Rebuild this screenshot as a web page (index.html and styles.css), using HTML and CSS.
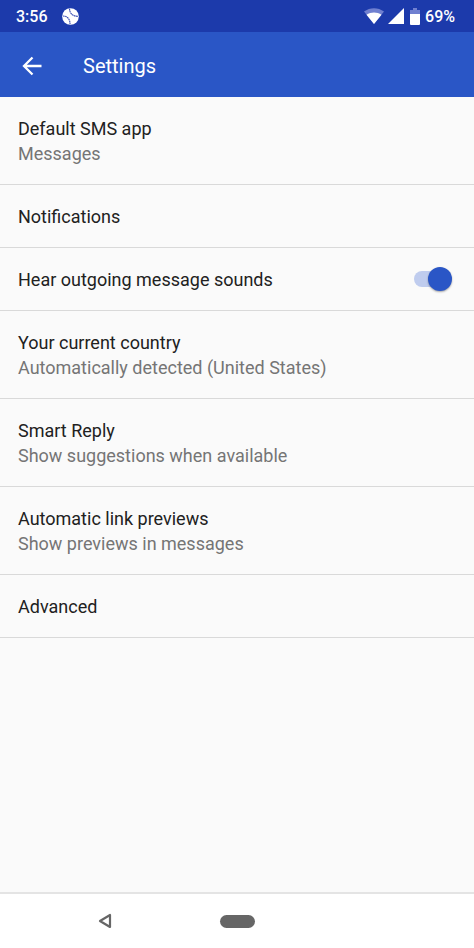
FILE: index.html
```html
<!DOCTYPE html>
<html lang="en">
<head>
<meta charset="utf-8">
<meta name="viewport" content="width=device-width, initial-scale=1">
<title>Settings</title>
<link rel="stylesheet" href="styles.css">
</head>
<body>
<div class="status">
  <span>3:56</span>
  <svg class="ball" viewBox="0 0 18 18" aria-hidden="true">
    <circle cx="9" cy="9" r="8.8" fill="#fff"/>
    <path d="M1 8.500c4.500 0 7.500 3 7.500 8.500M8 .8c0 5 3.500 8 9 8" fill="none" stroke="#3c50b4" stroke-width="1.200" stroke-dasharray="1.800 .5"/>
  </svg>
  <div class="indicators">
    <svg class="wifi" viewBox="0 0 20 16" aria-hidden="true">
      <path d="M0 3.500C6-1 14-1 20 3.500L10 16z" fill="#7080d0"/>
      <path d="M2.500 6.800C7 3.800 13 3.800 17.500 6.800L10 16z" fill="#fff"/>
    </svg>
    <svg class="signal" viewBox="0 0 16 16" aria-hidden="true"><path d="M16 0v16H0z" fill="#fff"/></svg>
    <svg class="battery" viewBox="0 0 10 17" aria-hidden="true">
      <path d="M3 0h4v2h3v5H0V2h3z" fill="#7080d0"/>
      <path d="M0 6h10v10q0 1-1 1H1q-1 0-1-1z" fill="#fff"/>
    </svg>
    <span>69%</span>
  </div>
</div>
<header class="bar">
  <button class="back" type="button" aria-label="Back">
    <svg viewBox="0 0 20 20" aria-hidden="true"><path d="M19.500 10H2M10.500 1.500L2 10l8.500 8.500" fill="none" stroke="#fff" stroke-width="2.300"/></svg>
  </button>
  <h1>Settings</h1>
</header>
<main class="list">
  <a class="row tall" href="#sms"><span class="name">Default SMS app</span><span class="detail">Messages</span></a>
  <a class="row" href="#notifications"><span class="name">Notifications</span></a>
  <label class="row toggle"><span class="name">Hear outgoing message sounds</span><input class="switch" type="checkbox" role="switch" checked></label>
  <a class="row tall" href="#country"><span class="name">Your current country</span><span class="detail">Automatically detected (United States)</span></a>
  <a class="row tall" href="#reply"><span class="name">Smart Reply</span><span class="detail">Show suggestions when available</span></a>
  <a class="row tall" href="#previews"><span class="name">Automatic link previews</span><span class="detail">Show previews in messages</span></a>
  <a class="row" href="#advanced"><span class="name">Advanced</span></a>
</main>
<nav class="nav" aria-label="System">
  <button class="nav-back" type="button" aria-label="Back">
    <svg viewBox="0 0 14 16" aria-hidden="true"><path d="M12 2v12L2 8z" fill="none" stroke="#666" stroke-width="2.200" stroke-linejoin="round"/></svg>
  </button>
  <button class="home" type="button" aria-label="Home"></button>
</nav>
</body>
</html>
```
FILE: styles.css
```css
* { box-sizing: border-box; }
body {
  margin: 0;
  min-height: 100vh;
  display: flex;
  flex-direction: column;
  background: #fafafa;
  color: #212121;
  font-family: Roboto, "Liberation Sans", sans-serif;
  font-size: 18px;
}
svg { display: block; }
button { border: 0; padding: 0; background: none; }
.status {
  height: 32px;
  padding: 0 19px 0 16px;
  display: flex;
  align-items: center;
  gap: 14px;
  background: #1c3aab;
  color: #fff;
  font-size: 16px;
  font-weight: 500;
}
.ball { width: 17px; height: 17px; }
.indicators { margin-left: auto; display: flex; align-items: center; gap: 4px; }
.wifi { width: 20px; height: 16px; }
.signal { width: 16px; height: 16px; }
.battery { width: 10px; height: 17px; margin: 0 1px 0 2px; }
.bar {
  height: 65px;
  padding: 2px 22px 0;
  display: flex;
  align-items: center;
  gap: 41px;
  background: #2a56c6;
}
.back svg { width: 20px; height: 20px; }
h1 { margin: 0; color: #fff; font-size: 20px; font-weight: 400; }
.list { flex: 1; }
.row {
  min-height: 63px;
  padding: 0 18px;
  display: flex;
  flex-direction: column;
  justify-content: center;
  border-bottom: 1px solid #d9d9d9;
  color: inherit;
  text-decoration: none;
  line-height: 25px;
}
.tall { min-height: 88px; }
.detail { color: #757575; }
.toggle { flex-direction: row; align-items: center; justify-content: space-between; }
.switch {
  appearance: none;
  position: relative;
  width: 34px;
  height: 16px;
  margin: 0 8px 0 0;
  border-radius: 8px;
  background: #bfccee;
}
.switch::before {
  content: "";
  position: absolute;
  top: -4px;
  left: 0;
  width: 24px;
  height: 24px;
  border-radius: 50%;
  background: #fafafa;
  box-shadow: 0 1px 2px rgba(0, 0, 0, .35);
}
.switch:checked::before { left: 14px; background: #2a56c6; }
.nav {
  height: 56px;
  display: grid;
  grid-template-columns: 1fr auto 1fr;
  align-items: center;
  background: #fff;
  border-top: 2px solid #e4e4e4;
}
.nav-back { justify-self: center; margin-right: 10px; }
.nav-back svg { width: 14px; height: 16px; }
.home { width: 35px; height: 13px; border-radius: 7px; background: #666; }
```
